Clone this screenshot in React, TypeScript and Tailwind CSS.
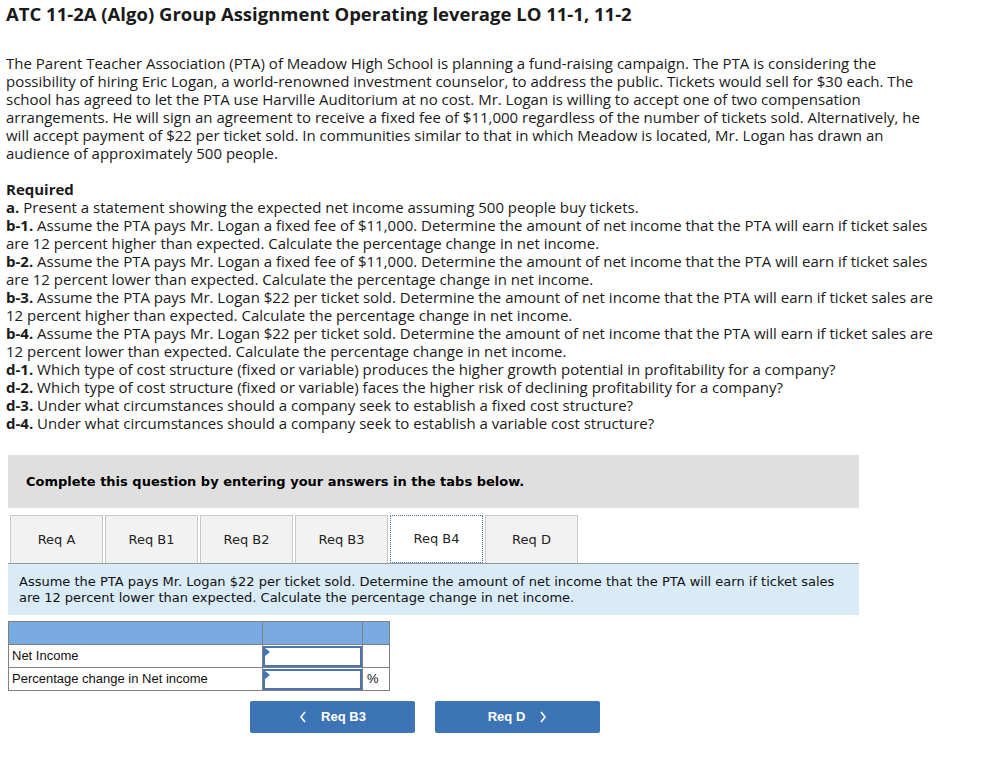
import React from "react";

const body = { fontFamily: "'Open Sans', 'Noto Sans', sans-serif" };

function Tab({ label, active }: { label: string; active?: boolean }) {
  return (
    <div
      className={
        "flex h-[48px] w-[93px] items-center justify-center text-[13px] text-[#222] " +
        (active
          ? "border border-dotted border-[#3b6fb6] bg-white"
          : "border border-[#c8c8c8] border-b-0 bg-[#f2f2f2]")
      }
    >
      {label}
    </div>
  );
}

const para = [
  "The Parent Teacher Association (PTA) of Meadow High School is planning a fund-raising campaign. The PTA is considering the",
  "possibility of hiring Eric Logan, a world-renowned investment counselor, to address the public. Tickets would sell for $30 each. The",
  "school has agreed to let the PTA use Harville Auditorium at no cost. Mr. Logan is willing to accept one of two compensation",
  "arrangements. He will sign an agreement to receive a fixed fee of $11,000 regardless of the number of tickets sold. Alternatively, he",
  "will accept payment of $22 per ticket sold. In communities similar to that in which Meadow is located, Mr. Logan has drawn an",
  "audience of approximately 500 people.",
];

const req: [string, string, string?][] = [
  ["a.", "Present a statement showing the expected net income assuming 500 people buy tickets."],
  ["b-1.", "Assume the PTA pays Mr. Logan a fixed fee of $11,000. Determine the amount of net income that the PTA will earn if ticket sales", "are 12 percent higher than expected. Calculate the percentage change in net income."],
  ["b-2.", "Assume the PTA pays Mr. Logan a fixed fee of $11,000. Determine the amount of net income that the PTA will earn if ticket sales", "are 12 percent lower than expected. Calculate the percentage change in net income."],
  ["b-3.", "Assume the PTA pays Mr. Logan $22 per ticket sold. Determine the amount of net income that the PTA will earn if ticket sales are", "12 percent higher than expected. Calculate the percentage change in net income."],
  ["b-4.", "Assume the PTA pays Mr. Logan $22 per ticket sold. Determine the amount of net income that the PTA will earn if ticket sales are", "12 percent lower than expected. Calculate the percentage change in net income."],
  ["d-1.", "Which type of cost structure (fixed or variable) produces the higher growth potential in profitability for a company?"],
  ["d-2.", "Which type of cost structure (fixed or variable) faces the higher risk of declining profitability for a company?"],
  ["d-3.", "Under what circumstances should a company seek to establish a fixed cost structure?"],
  ["d-4.", "Under what circumstances should a company seek to establish a variable cost structure?"],
];

function Input() {
  return (
    <div className="relative h-[21px] border-2 border-[#4a74ad]">
      <div className="absolute left-0 top-0 h-0 w-0 border-b-[4px] border-l-[5px] border-t-[4px] border-b-transparent border-l-[#3d74c4] border-t-transparent" />
    </div>
  );
}

export default function App() {
  return (
    <div className="min-h-[769px] w-[997px] bg-white text-[#1a1a1a]">
      <div className="px-[6px] pt-[3px]" style={body}>
        <h1 className="whitespace-nowrap text-[18.5px] font-bold leading-[22px] text-[#1a1a1a]">
          ATC 11-2A (Algo) Group Assignment Operating leverage LO 11-1, 11-2
        </h1>
        <div className="mt-[29px] whitespace-nowrap text-[15px] leading-[18px]">
          {para.map((l, i) => (
            <div key={i}>{l}</div>
          ))}
        </div>
        <div className="mt-[18px] whitespace-nowrap text-[15px] leading-[18px]">
          <div className="font-bold">Required</div>
          {req.map(([k, v, w]) => (
            <React.Fragment key={k}>
              <div>
                <span className="font-bold">{k}</span> {v}
              </div>
              {w && <div>{w}</div>}
            </React.Fragment>
          ))}
        </div>
      </div>

      <div className="ml-[8px] mt-[23px] w-[851px]" style={{ fontFamily: "Verdana, 'DejaVu Sans', sans-serif" }}>
        <div className="flex h-[53px] items-center bg-[#dfdfdf] pl-[18px] text-[13px] font-bold text-black">
          Complete this question by entering your answers in the tabs below.
        </div>
        <div className="mt-[7px] flex gap-[2px] pl-[2px]">
          <Tab label="Req A" />
          <Tab label="Req B1" />
          <Tab label="Req B2" />
          <Tab label="Req B3" />
          <Tab label="Req B4" active />
          <Tab label="Req D" />
        </div>
        <div className="border-t border-[#999] bg-[#d9ebf7] px-[11px] pb-[9px] pt-[10px] text-[13px] leading-[16px] text-[#111]">
          Assume the PTA pays Mr. Logan $22 per ticket sold. Determine the amount of net income that the PTA will earn if ticket sales are 12 percent lower than expected. Calculate the percentage change in net income.
        </div>
      </div>

      <div className="ml-[8px] mt-[6px]" style={{ fontFamily: "Arial, 'Liberation Sans', sans-serif" }}>
        <table className="border-collapse text-[13px] text-[#111]">
          <tbody>
            <tr className="h-[23px] bg-[#79aae1]">
              <td className="w-[254px] border border-[#808080]"></td>
              <td className="w-[100px] border border-[#808080]"></td>
              <td className="w-[27px] border border-[#808080]"></td>
            </tr>
            <tr className="h-[23px]">
              <td className="border border-[#808080] pl-[3px]">Net Income</td>
              <td className="border border-[#808080] p-0">
                <Input />
              </td>
              <td className="border border-[#808080]"></td>
            </tr>
            <tr className="h-[23px]">
              <td className="border border-[#808080] pl-[3px]">Percentage change in Net income</td>
              <td className="border border-[#808080] p-0">
                <Input />
              </td>
              <td className="border border-[#808080] pl-[4px]">%</td>
            </tr>
          </tbody>
        </table>
      </div>

      <div className="ml-[250px] mt-[10px] flex gap-[20px]" style={{ fontFamily: "Arial, 'Liberation Sans', sans-serif" }}>
        <div className="flex h-[32px] w-[165px] items-center justify-center gap-[14px] rounded-[2px] bg-[#3d74b6] text-[13px] font-bold text-white">
          <svg width="8" height="12" viewBox="0 0 8 12"><path d="M6 1L2 6l4 5" fill="none" stroke="white" strokeWidth="1.6" /></svg>
          <span>Req B3</span>
        </div>
        <div className="flex h-[32px] w-[165px] items-center justify-center gap-[14px] rounded-[2px] bg-[#3d74b6] text-[13px] font-bold text-white">
          <span>Req D</span>
          <svg width="8" height="12" viewBox="0 0 8 12"><path d="M2 1l4 5-4 5" fill="none" stroke="white" strokeWidth="1.6" /></svg>
        </div>
      </div>
    </div>
  );
}
